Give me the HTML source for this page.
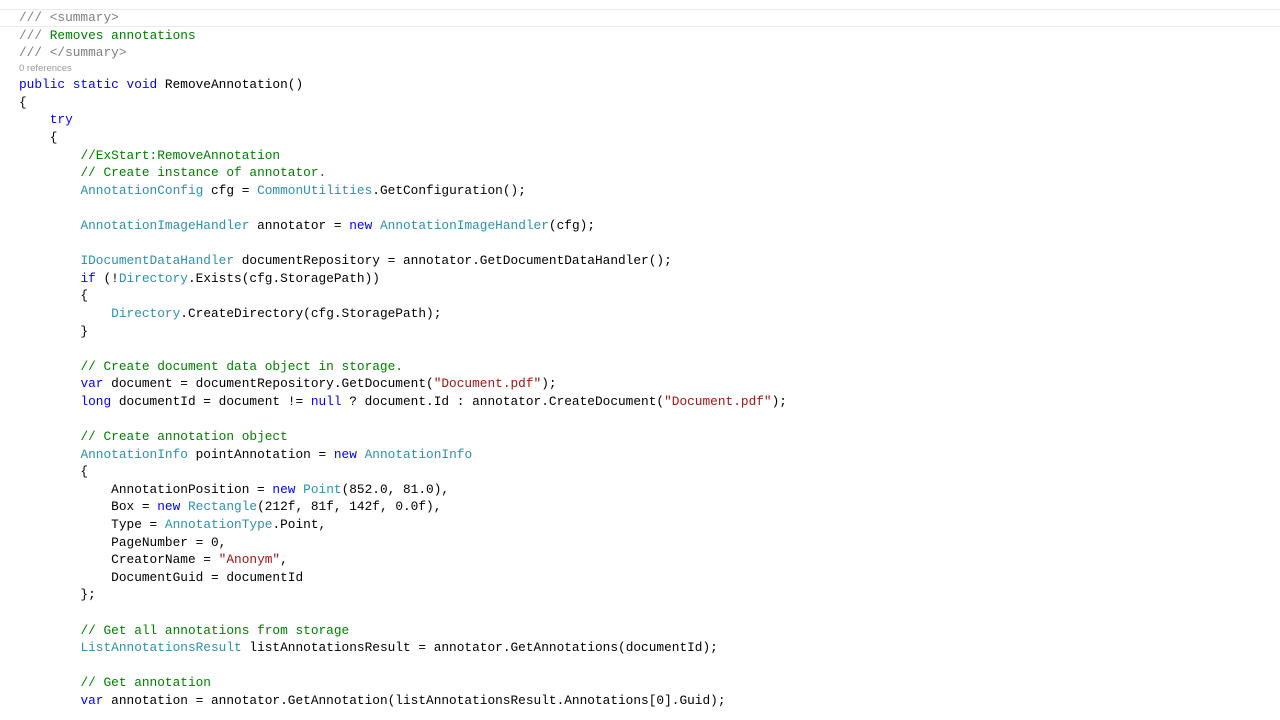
<!DOCTYPE html>
<html><head><meta charset="utf-8"><style>
html,body{margin:0;padding:0;background:#fff;width:1280px;height:720px;overflow:hidden}
.cur{position:absolute;left:0;top:9px;width:1280px;height:16px;border-top:1px solid #eaeaea;border-bottom:1px solid #eaeaea}
.l{position:absolute;left:19px;font-family:"Liberation Mono",monospace;font-size:12.8px;line-height:17.6px;white-space:pre;color:#000}
.k{color:#0000ff}.t{color:#2b91af}.c{color:#008000}.s{color:#a31515}.g{color:#808080}
.ref{position:absolute;left:19px;top:63px;font-family:"Liberation Sans",sans-serif;font-size:9.5px;color:#999}
</style></head><body>
<div class="cur"></div>
<div class="l" style="top:9px"><span class="g">/// &lt;summary&gt;</span></div>
<div class="l" style="top:26.5px"><span class="g">///</span> <span class="c">Removes annotations</span></div>
<div class="l" style="top:44px"><span class="g">/// &lt;/summary&gt;</span></div>
<div class="ref">0 references</div>
<div class="l" style="top:76.2px"><span class="k">public static void</span> RemoveAnnotation()
{
    <span class="k">try</span>
    {
        <span class="c">//ExStart:RemoveAnnotation</span>
        <span class="c">// Create instance of annotator.</span>
        <span class="t">AnnotationConfig</span> cfg = <span class="t">CommonUtilities</span>.GetConfiguration();

        <span class="t">AnnotationImageHandler</span> annotator = <span class="k">new</span> <span class="t">AnnotationImageHandler</span>(cfg);

        <span class="t">IDocumentDataHandler</span> documentRepository = annotator.GetDocumentDataHandler();
        <span class="k">if</span> (!<span class="t">Directory</span>.Exists(cfg.StoragePath))
        {
            <span class="t">Directory</span>.CreateDirectory(cfg.StoragePath);
        }

        <span class="c">// Create document data object in storage.</span>
        <span class="k">var</span> document = documentRepository.GetDocument(<span class="s">"Document.pdf"</span>);
        <span class="k">long</span> documentId = document != <span class="k">null</span> ? document.Id : annotator.CreateDocument(<span class="s">"Document.pdf"</span>);

        <span class="c">// Create annotation object</span>
        <span class="t">AnnotationInfo</span> pointAnnotation = <span class="k">new</span> <span class="t">AnnotationInfo</span>
        {
            AnnotationPosition = <span class="k">new</span> <span class="t">Point</span>(852.0, 81.0),
            Box = <span class="k">new</span> <span class="t">Rectangle</span>(212f, 81f, 142f, 0.0f),
            Type = <span class="t">AnnotationType</span>.Point,
            PageNumber = 0,
            CreatorName = <span class="s">"Anonym"</span>,
            DocumentGuid = documentId
        };

        <span class="c">// Get all annotations from storage</span>
        <span class="t">ListAnnotationsResult</span> listAnnotationsResult = annotator.GetAnnotations(documentId);

        <span class="c">// Get annotation</span>
        <span class="k">var</span> annotation = annotator.GetAnnotation(listAnnotationsResult.Annotations[0].Guid);</div>
</body></html>
